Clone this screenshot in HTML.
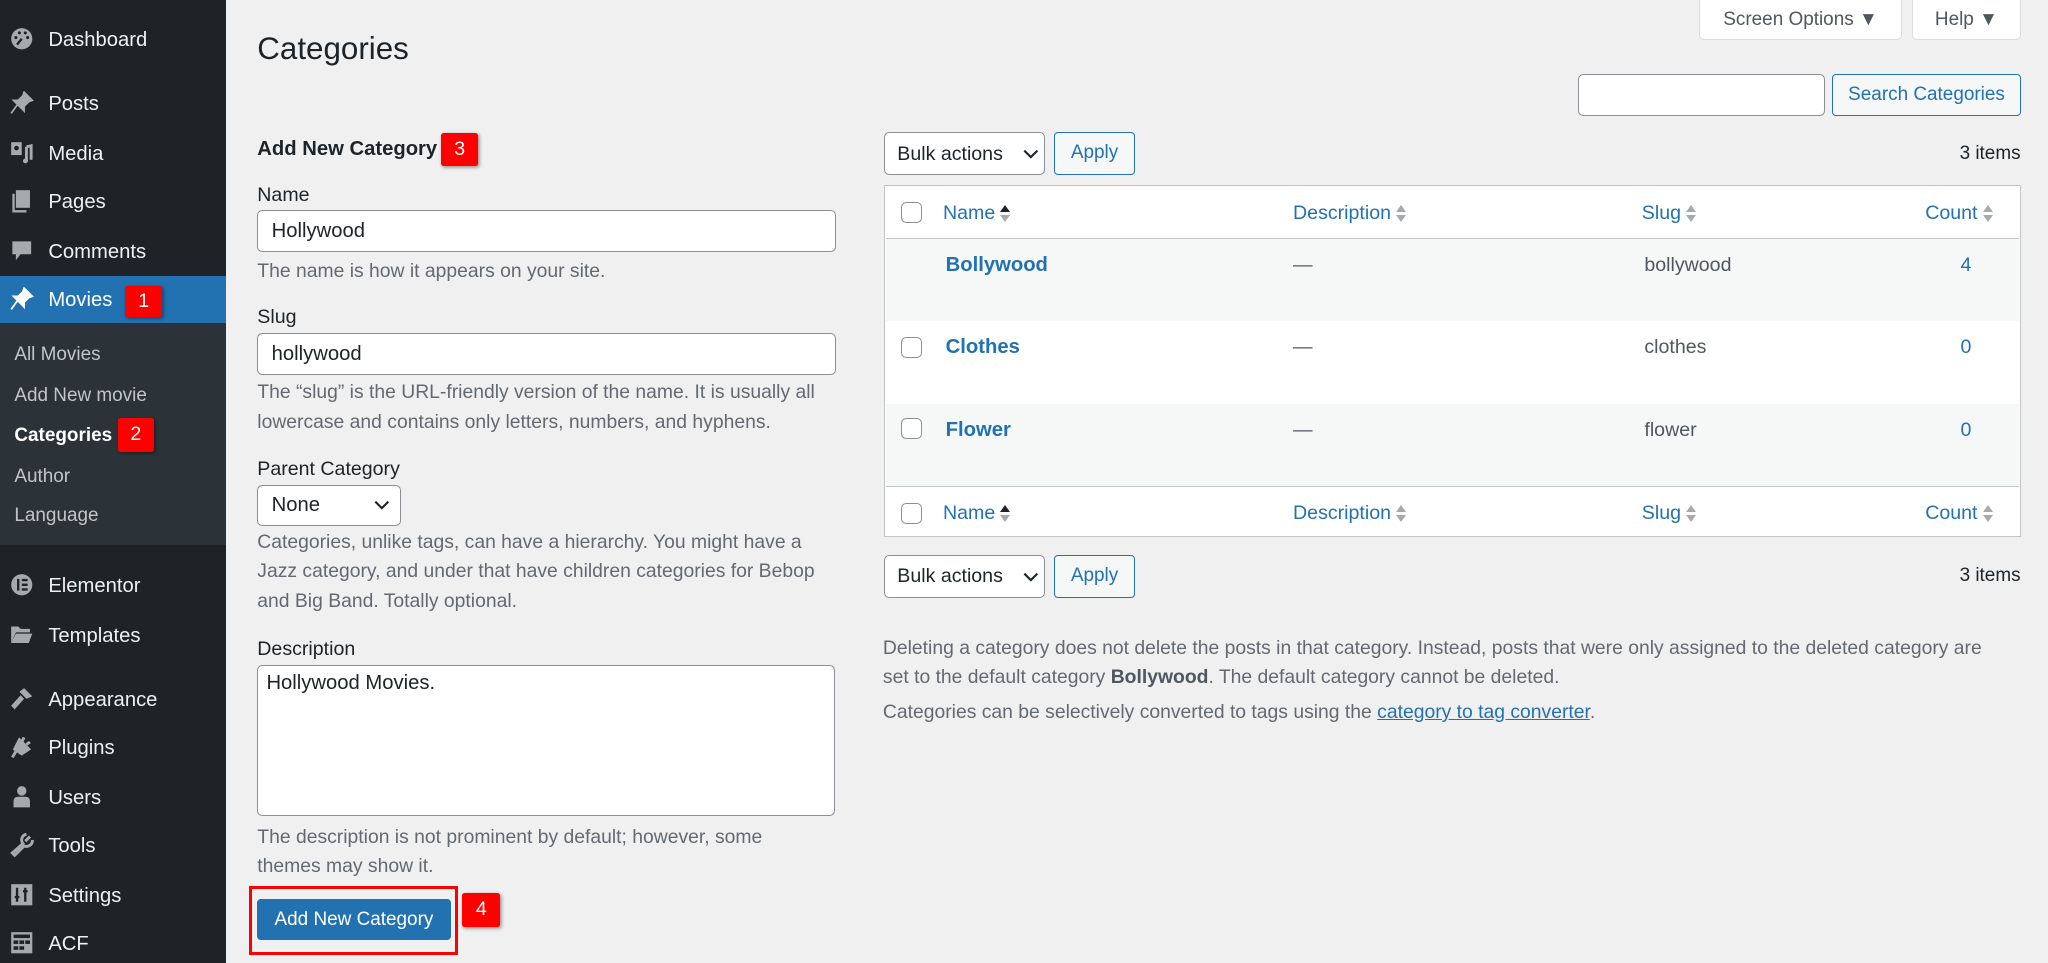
<!DOCTYPE html>
<html><head><meta charset="utf-8"><style>
html,body{margin:0;padding:0;}
body{width:1568px;height:737px;zoom:1.30612;background:#f0f0f1;font-family:"Liberation Sans",sans-serif;font-size:15px;color:#1d2327;position:relative;overflow:hidden;}
.a{position:absolute;white-space:nowrap;line-height:20px;}
#sb{position:absolute;left:0;top:0;width:173px;height:737px;background:#1d2327;}
#sub{position:absolute;left:0;top:247px;width:173px;height:170px;background:#2c3338;}
#act{position:absolute;left:0;top:211px;width:173px;height:36px;background:#2271b1;}
.m{position:absolute;left:37px;color:#f0f0f1;font-size:15.5px;line-height:20px;}
.s{position:absolute;left:11px;color:#c3c4c7;font-size:14.5px;line-height:20px;}
.ic{position:absolute;left:8px;width:18px;height:18px;}
.badge{position:absolute;background:#f00;color:#fff;font-size:15px;text-align:center;border-radius:2px;box-shadow:1px 1px 3px rgba(0,0,0,.4);}
.inp{position:absolute;background:#fff;border:1px solid #8c8f94;border-radius:4px;box-sizing:border-box;}
.help{color:#646970;font-size:14.8px;}
.btn{position:absolute;box-sizing:border-box;border:1px solid #2271b1;border-radius:3px;color:#2271b1;background:#f6f7f7;text-align:center;font-size:14.5px;}
.lnk{color:#2271b1;}
.cb{position:absolute;left:690px;width:16px;height:16px;border:1px solid #8c8f94;border-radius:4px;background:#fff;box-sizing:border-box;}
.arr{display:inline-block;vertical-align:middle;margin-left:4px;width:8px;height:16px;position:relative;}
.arr:before{content:"";position:absolute;left:0;top:1px;border-left:4px solid transparent;border-right:4px solid transparent;border-bottom:6px solid #a7aaad;}
.arr:after{content:"";position:absolute;left:0;top:9px;border-left:4px solid transparent;border-right:4px solid transparent;border-top:6px solid #a7aaad;}
.arr.up:before{border-bottom-color:#1d2327;}
</style></head><body>
<div id="sb"></div><div id="sub"></div><div id="act"></div>
<svg style="position:absolute;left:173px;top:221px" width="8" height="16"><path d="M8 0 L0 8 L8 16Z" fill="#f0f0f1"/></svg>
<svg class="ic" style="top:21px" viewBox="0 0 20 20"><circle cx="10" cy="10" r="9" fill="#a7aaad"/><path d="M10 10 L6 15" stroke="#1d2327" stroke-width="2"/><circle cx="5" cy="9" r="1.3" fill="#1d2327"/><circle cx="8" cy="5" r="1.3" fill="#1d2327"/><circle cx="13" cy="5" r="1.3" fill="#1d2327"/><circle cx="15" cy="9" r="1.3" fill="#1d2327"/></svg>
<svg class="ic" style="top:70px" viewBox="0 0 20 20"><path d="M12 1 L19 8 L16 9 L12 13 L12 17 L3 8 L7 8 L11 4Z M6 12 L1 19" fill="#a7aaad" stroke="#a7aaad" stroke-width="1.5"/></svg>
<svg class="ic" style="top:108px" viewBox="0 0 20 20"><rect x="1" y="1" width="9" height="11" fill="#a7aaad"/><circle cx="5.5" cy="6" r="2" fill="#1d2327"/><path d="M14 5 L18 4 L18 16 M14 5 L14 18" stroke="#a7aaad" stroke-width="2.5" fill="none"/><circle cx="13" cy="17" r="2" fill="#a7aaad"/></svg>
<svg class="ic" style="top:145px" viewBox="0 0 20 20"><rect x="5" y="1" width="12" height="15" fill="#a7aaad"/><path d="M3 4 L3 19 L14 19" stroke="#a7aaad" stroke-width="2" fill="none"/></svg>
<svg class="ic" style="top:183px" viewBox="0 0 20 20"><path d="M2 2 H18 V13 H9 L5 18 V13 H2Z" fill="#a7aaad"/></svg>
<svg class="ic" style="top:220px" viewBox="0 0 20 20"><path d="M12 1 L19 8 L16 9 L12 13 L12 17 L3 8 L7 8 L11 4Z M6 12 L1 19" fill="#fff" stroke="#fff" stroke-width="1.5"/></svg>
<svg class="ic" style="top:439px" viewBox="0 0 20 20"><circle cx="10" cy="10" r="9" fill="#a7aaad"/><rect x="6" y="5" width="2" height="10" fill="#1d2327"/><rect x="10" y="5" width="5" height="2" fill="#1d2327"/><rect x="10" y="9" width="5" height="2" fill="#1d2327"/><rect x="10" y="13" width="5" height="2" fill="#1d2327"/></svg>
<svg class="ic" style="top:477px" viewBox="0 0 20 20"><path d="M1 3 H7 L9 5 H17 V8 H5 L1 17Z M5 9 H19 L16 17 H1Z" fill="#a7aaad"/></svg>
<svg class="ic" style="top:526px" viewBox="0 0 20 20"><path d="M12 1 L19 8 L14 10 L8 4Z M9 7 L12 10 L4 19 L1 16Z" fill="#a7aaad"/></svg>
<svg class="ic" style="top:563px" viewBox="0 0 20 20"><path d="M8 4 L16 12 L10 16 L4 12Z M12 2 L10 6 M17 6 L14 8 M5 14 L2 19" stroke="#a7aaad" stroke-width="2.5" fill="#a7aaad"/></svg>
<svg class="ic" style="top:601px" viewBox="0 0 20 20"><circle cx="10" cy="5" r="4" fill="#a7aaad"/><path d="M3 19 V14 Q3 10 7 10 H13 Q17 10 17 14 V19Z" fill="#a7aaad"/></svg>
<svg class="ic" style="top:638px" viewBox="0 0 20 20"><path d="M17 3 L13 7 M14 1 A5 5 0 0 0 11 9 L2 17 L4 19 L12 11 A5 5 0 0 0 19 6" stroke="#a7aaad" stroke-width="2.5" fill="none"/></svg>
<svg class="ic" style="top:676px" viewBox="0 0 20 20"><rect x="1" y="1" width="18" height="18" fill="#a7aaad"/><path d="M6 4 V16 M13 4 V16" stroke="#1d2327" stroke-width="2"/><rect x="4" y="11" width="4" height="2" fill="#1d2327"/><rect x="11" y="6" width="4" height="2" fill="#1d2327"/></svg>
<svg class="ic" style="top:713px" viewBox="0 0 20 20"><rect x="1" y="1" width="18" height="18" fill="#a7aaad"/><rect x="3" y="3" width="14" height="3" fill="#1d2327"/><g fill="#1d2327"><rect x="3" y="8" width="4" height="3"/><rect x="8" y="8" width="4" height="3"/><rect x="13" y="8" width="4" height="3"/><rect x="3" y="13" width="4" height="3"/><rect x="8" y="13" width="4" height="3"/></g></svg>

<div class="m" style="top:21px">Dashboard</div>
<div class="m" style="top:70px">Posts</div>
<div class="m" style="top:108px">Media</div>
<div class="m" style="top:145px">Pages</div>
<div class="m" style="top:183px">Comments</div>
<div class="m" style="top:220px;color:#fff">Movies</div>
<div class="badge" style="left:96px;top:219px;width:28px;height:24px;line-height:24px">1</div>
<div class="s" style="top:262px">All Movies</div>
<div class="s" style="top:293px">Add New movie</div>
<div class="s" style="top:324px;color:#fff;font-weight:bold">Categories</div>
<div class="badge" style="left:90px;top:320px;width:28px;height:26px;line-height:26px">2</div>
<div class="s" style="top:355px">Author</div>
<div class="s" style="top:385px">Language</div>
<div class="m" style="top:439px">Elementor</div>
<div class="m" style="top:477px">Templates</div>
<div class="m" style="top:526px">Appearance</div>
<div class="m" style="top:563px">Plugins</div>
<div class="m" style="top:601px">Users</div>
<div class="m" style="top:638px">Tools</div>
<div class="m" style="top:676px">Settings</div>
<div class="m" style="top:713px">ACF</div>

<div class="a" style="left:197px;top:22px;font-size:24px;line-height:30px">Categories</div>
<div class="a" style="left:1301px;top:-1px;width:155px;height:32px;background:#fff;border:1px solid #dcdcde;border-radius:0 0 4px 4px;box-sizing:border-box;color:#50575e;text-align:center;line-height:30px;font-size:14.5px">Screen Options ▼</div>
<div class="a" style="left:1464px;top:-1px;width:83px;height:32px;background:#fff;border:1px solid #dcdcde;border-radius:0 0 4px 4px;box-sizing:border-box;color:#50575e;text-align:center;line-height:30px;font-size:14.5px">Help ▼</div>
<div class="inp" style="left:1208px;top:57px;width:189px;height:32px"></div>
<div class="btn" style="left:1403px;top:57px;width:144px;height:32px;line-height:30px">Search Categories</div>

<div class="a" style="left:197px;top:104px;font-weight:bold;font-size:15.5px">Add New Category</div>
<div class="badge" style="left:338px;top:102px;width:28px;height:25px;line-height:25px">3</div>
<div class="a" style="left:197px;top:139px">Name</div>
<div class="inp" style="left:197px;top:161px;width:443px;height:32px"></div>
<div class="a" style="left:208px;top:167px;font-size:15.5px">Hollywood</div>
<div class="a help" style="left:197px;top:198px">The name is how it appears on your site.</div>
<div class="a" style="left:197px;top:233px">Slug</div>
<div class="inp" style="left:197px;top:255px;width:443px;height:32px"></div>
<div class="a" style="left:208px;top:261px;font-size:15.5px">hollywood</div>
<div class="a help" style="left:197px;top:291px">The “slug” is the URL-friendly version of the name. It is usually all</div>
<div class="a help" style="left:197px;top:314px">lowercase and contains only letters, numbers, and hyphens.</div>
<div class="a" style="left:197px;top:349px">Parent Category</div>
<div class="inp" style="left:197px;top:371px;width:110px;height:32px"></div>
<div class="a" style="left:208px;top:377px;font-size:15.5px">None</div>
<svg style="position:absolute;left:286px;top:382px" width="12" height="10"><path d="M1 2 L6 7 L11 2" stroke="#1d2327" stroke-width="1.6" fill="none"/></svg>
<div class="a help" style="left:197px;top:406px">Categories, unlike tags, can have a hierarchy. You might have a</div>
<div class="a help" style="left:197px;top:428px">Jazz category, and under that have children categories for Bebop</div>
<div class="a help" style="left:197px;top:451px">and Big Band. Totally optional.</div>
<div class="a" style="left:197px;top:487px">Description</div>
<div class="inp" style="left:197px;top:509px;width:442px;height:116px"></div>
<div class="a" style="left:204px;top:513px;font-size:15.5px">Hollywood Movies.</div>
<div class="a help" style="left:197px;top:632px">The description is not prominent by default; however, some</div>
<div class="a help" style="left:197px;top:654px">themes may show it.</div>
<div style="position:absolute;left:191px;top:678px;width:160px;height:53px;border:3px solid #f00;box-sizing:border-box"></div>
<div class="btn" style="left:197px;top:688px;width:148px;height:32px;line-height:30px;background:#2271b1;color:#fff">Add New Category</div>
<div class="badge" style="left:354px;top:684px;width:29px;height:26px;line-height:26px">4</div>

<div class="inp" style="left:677px;top:101px;width:123px;height:33px"></div>
<div class="a" style="left:687px;top:108px">Bulk actions</div>
<svg style="position:absolute;left:783px;top:113px" width="12" height="10"><path d="M1 2 L6 7 L11 2" stroke="#1d2327" stroke-width="1.6" fill="none"/></svg>
<div class="btn" style="left:807px;top:101px;width:62px;height:33px;line-height:31px">Apply</div>
<div class="a" style="right:21px;top:108px;font-size:14.5px">3 items</div>

<div style="position:absolute;left:677px;top:142px;width:870px;height:269px;border:1px solid #c3c4c7;box-sizing:border-box;background:#fff"></div>
<div style="position:absolute;left:678px;top:182px;width:868px;height:1px;background:#c3c4c7"></div>
<div style="position:absolute;left:678px;top:183px;width:868px;height:63px;background:#f6f7f7"></div>
<div style="position:absolute;left:678px;top:309px;width:868px;height:63px;background:#f6f7f7"></div>
<div style="position:absolute;left:678px;top:372px;width:868px;height:1px;background:#c3c4c7"></div>

<div class="cb" style="top:155px"></div>
<div class="a lnk" style="left:722px;top:153px">Name<span class="arr up"></span></div>
<div class="a lnk" style="left:990px;top:153px">Description<span class="arr"></span></div>
<div class="a lnk" style="left:1257px;top:153px">Slug<span class="arr"></span></div>
<div class="a lnk" style="left:1474px;top:153px">Count<span class="arr"></span></div>

<div class="a lnk" style="left:724px;top:193px;font-weight:bold;font-size:15.5px">Bollywood</div>
<div class="a" style="left:990px;top:193px;color:#50575e">—</div>
<div class="a" style="left:1259px;top:193px;color:#50575e">bollywood</div>
<div class="a lnk" style="left:1501px;top:193px">4</div>

<div class="cb" style="top:258px"></div>
<div class="a lnk" style="left:724px;top:256px;font-weight:bold;font-size:15.5px">Clothes</div>
<div class="a" style="left:990px;top:256px;color:#50575e">—</div>
<div class="a" style="left:1259px;top:256px;color:#50575e">clothes</div>
<div class="a lnk" style="left:1501px;top:256px">0</div>

<div class="cb" style="top:320px"></div>
<div class="a lnk" style="left:724px;top:319px;font-weight:bold;font-size:15.5px">Flower</div>
<div class="a" style="left:990px;top:319px;color:#50575e">—</div>
<div class="a" style="left:1259px;top:319px;color:#50575e">flower</div>
<div class="a lnk" style="left:1501px;top:319px">0</div>

<div class="cb" style="top:385px"></div>
<div class="a lnk" style="left:722px;top:383px">Name<span class="arr up"></span></div>
<div class="a lnk" style="left:990px;top:383px">Description<span class="arr"></span></div>
<div class="a lnk" style="left:1257px;top:383px">Slug<span class="arr"></span></div>
<div class="a lnk" style="left:1474px;top:383px">Count<span class="arr"></span></div>

<div class="inp" style="left:677px;top:425px;width:123px;height:33px"></div>
<div class="a" style="left:687px;top:431px">Bulk actions</div>
<svg style="position:absolute;left:783px;top:437px" width="12" height="10"><path d="M1 2 L6 7 L11 2" stroke="#1d2327" stroke-width="1.6" fill="none"/></svg>
<div class="btn" style="left:807px;top:425px;width:62px;height:33px;line-height:31px">Apply</div>
<div class="a" style="right:21px;top:431px;font-size:14.5px">3 items</div>

<div class="a help" style="left:676px;top:487px">Deleting a category does not delete the posts in that category. Instead, posts that were only assigned to the deleted category are</div>
<div class="a help" style="left:676px;top:509px">set to the default category <b style="color:#50575e">Bollywood</b>. The default category cannot be deleted.</div>
<div class="a help" style="left:676px;top:536px">Categories can be selectively converted to tags using the <span style="color:#2271b1;text-decoration:underline">category to tag converter</span>.</div>
</body></html>
